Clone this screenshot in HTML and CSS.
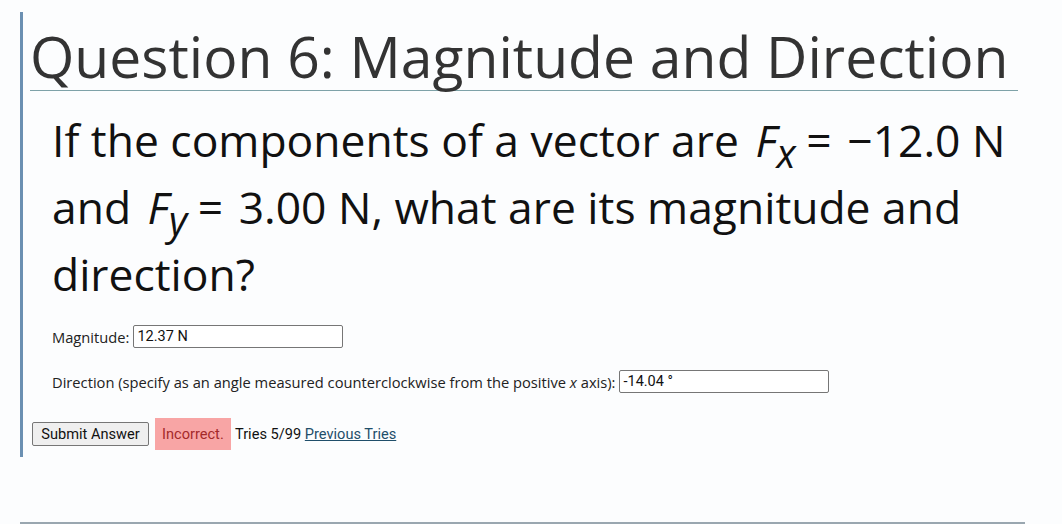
FILE: index.html
```html
<!DOCTYPE html>
<html lang="en">
<head>
<meta charset="UTF-8">
<title>Question 6</title>
<link rel="stylesheet" href="styles.css">
</head>
<body>
<div class="page">
    <section class="problem">
        <h2 class="problem_title">Question 6: Magnitude and Direction</h2>
        <div class="problem_text">
            If the components of a vector are <i class="var">F<sub>x</sub></i> <span class="eq">=</span> &minus;12.0 N
            and <i class="var">F<sub>y</sub></i> <span class="eq">=</span> 3.00 N, what are its magnitude and direction?
        </div>
        <div class="answer_row">
            <label>Magnitude:</label>
            <input class="answer_input" type="text" value="12.37 N">
        </div>
        <div class="answer_row dir_row">
            <label>Direction (specify as an angle measured counterclockwise from the positive <i>x</i> axis):</label>
            <input class="answer_input" type="text" value="-14.04 &deg;">
        </div>
        <div class="submit_row">
            <button class="submit_btn">Submit Answer</button>
            <span class="status_bad">Incorrect.</span>
            <span class="tries">Tries 5/99 <a href="#">Previous Tries</a></span>
        </div>
    </section>
    <hr class="bottom_rule">
</div>
</body>
</html>
```

FILE: styles.css
```css
* {
    margin: 0;
    padding: 0;
    box-sizing: border-box;
}

body {
    background: #fcfdfe;
    font-family: "Open Sans", sans-serif;
    color: #222;
}

.page {
    padding: 12px 37px 0 20px;
}

.problem {
    border-left: 3px solid #6b90b2;
    padding: 10px 0 7px 7px;
    margin-right: 7px;
}

.problem_title {
    font-weight: normal;
    font-size: 57px;
    line-height: 68px;
    white-space: nowrap;
    color: #333;
    border-bottom: 1px solid #7ea2a8;
}

.problem_text {
    font-size: 44.4px;
    line-height: 67px;
    color: #111;
    padding: 16px 0 0 22px;
}

.problem_text .var {
    margin-left: 5px;
}

.problem_text sub {
    font-size: 0.9em;
    vertical-align: -0.28em;
    line-height: 0;
}

.problem_text .eq {
    margin-left: -1px;
    margin-right: 4px;
}

.answer_row {
    padding-left: 22px;
    font-size: 14.7px;
    display: flex;
    align-items: center;
    gap: 4px;
    margin-top: 17px;
    color: #222;
}

.dir_row {
    margin-top: 22px;
}

.answer_input {
    width: 210px;
    height: 23px;
    border: 1px solid #767676;
    border-radius: 2px;
    background: #fff;
    font-family: Roboto, sans-serif;
    font-size: 14.5px;
    padding: 0 3px;
    color: #111;
}

.submit_row {
    display: flex;
    align-items: center;
    padding-left: 2px;
    margin-top: 25px;
    font-family: Roboto, sans-serif;
    font-size: 14.6px;
}

.submit_btn {
    font-family: Roboto, sans-serif;
    font-size: 14.6px;
    width: 117px;
    height: 24px;
    background: #efefef;
    border: 1px solid #767676;
    border-radius: 2px;
    color: #111;
}

.status_bad {
    background: #f8a5a5;
    color: #a42a2a;
    width: 76px;
    line-height: 32px;
    padding-left: 7px;
    margin-left: 6px;
}

.tries {
    margin-left: 4px;
    color: #111;
}

.tries a {
    color: #1f4e6a;
}

.bottom_rule {
    border: none;
    border-top: 2px solid #9aa7b0;
    margin-top: 65px;
}
```
